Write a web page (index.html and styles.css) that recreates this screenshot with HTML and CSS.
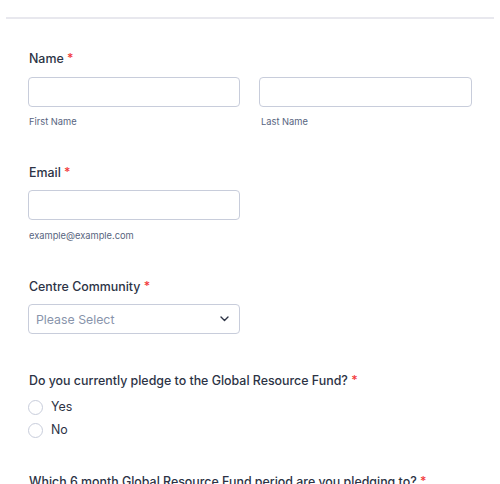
FILE: index.html
```html
<!DOCTYPE html>
<html>
<head>
<meta charset="utf-8">
<link rel="stylesheet" href="styles.css">
</head>
<body>
<div class="divider"></div>
<form class="form">
  <div class="field f-name">
    <div class="label">Name <span class="req">*</span></div>
    <div class="row">
      <div class="col">
        <div class="input"></div>
        <div class="sub">First Name</div>
      </div>
      <div class="col">
        <div class="input"></div>
        <div class="sub">Last Name</div>
      </div>
    </div>
  </div>
  <div class="field f-email">
    <div class="label">Email <span class="req">*</span></div>
    <div class="col">
      <div class="input"></div>
      <div class="sub">example@example.com</div>
    </div>
  </div>
  <div class="field f-centre">
    <div class="label">Centre Community <span class="req">*</span></div>
    <div class="col">
      <div class="input select">
        <span class="placeholder">Please Select</span>
        <svg class="chev" width="9" height="6" viewBox="0 0 9 6"><path d="M1 1l3.5 3.5L8 1" fill="none" stroke="#2c3345" stroke-width="1.4" stroke-linecap="round" stroke-linejoin="round"/></svg>
      </div>
    </div>
  </div>
  <div class="field f-pledge">
    <div class="label">Do you currently pledge to the Global Resource Fund? <span class="req">*</span></div>
    <div class="radios">
      <label class="radio"><span class="circle"></span><span>Yes</span></label>
      <label class="radio"><span class="circle"></span><span>No</span></label>
    </div>
  </div>
  <div class="field f-period">
    <div class="label">Which 6 month Global Resource Fund period are you pledging to? <span class="req">*</span></div>
  </div>
</form>
</body>
</html>
```
FILE: styles.css
```css
html, body {
  margin: 0;
  padding: 0;
  background: #ffffff;
  font-family: Inter, "Noto Sans", sans-serif;
  color: #2c3345;
}
.divider {
  margin: 17px 6px 0 6px;
  height: 2px;
  background: #e8e8ee;
}
.form {
  padding-left: 28px;
  padding-right: 28px;
}
.field {
  display: flex;
  flex-direction: column;
}
.label {
  font-size: 12.4px;
  line-height: 18px;
  font-weight: 500;
  color: #2c3345;
  margin-left: 1px;
  white-space: nowrap;
}
.req {
  color: #f23a3c;
}
.row {
  display: flex;
  gap: 19px;
}
.col {
  display: flex;
  flex-direction: column;
  width: 212px;
}
.input {
  box-sizing: border-box;
  height: 30px;
  width: 212px;
  border: 1px solid #c8cddb;
  border-radius: 4px;
  background: #fff;
}
.row .col:last-child .input {
  width: 213px;
}
.sub {
  font-size: 9.3px;
  line-height: 14px;
  color: #57647e;
  margin-top: 8px;
  margin-left: 1px;
}
.row .col:last-child .sub {
  margin-left: 2px;
}
.f-name { margin-top: 31px; }
.f-name .label { margin-bottom: 9px; }
.f-email { margin-top: 35px; }
.f-email .label { margin-bottom: 8px; }
.f-email .sub { margin-top: 9px; }
.f-centre { margin-top: 35px; }
.f-centre .label { margin-bottom: 8px; }
.select {
  display: flex;
  align-items: center;
  justify-content: space-between;
  padding: 0 10px 0 7px;
}
.placeholder {
  font-size: 12.3px;
  color: #8894ab;
}
.f-pledge { margin-top: 38px; }
.f-pledge .label { margin-bottom: 9px; }
.radios {
  display: flex;
  flex-direction: column;
  gap: 7px;
}
.radio {
  display: flex;
  align-items: center;
  gap: 8px;
  font-size: 12.4px;
  line-height: 16px;
  color: #2c3345;
}
.circle {
  box-sizing: border-box;
  width: 15px;
  height: 15px;
  border: 1px solid #c8cddb;
  border-radius: 50%;
}
.f-period { margin-top: 35px; }
```
